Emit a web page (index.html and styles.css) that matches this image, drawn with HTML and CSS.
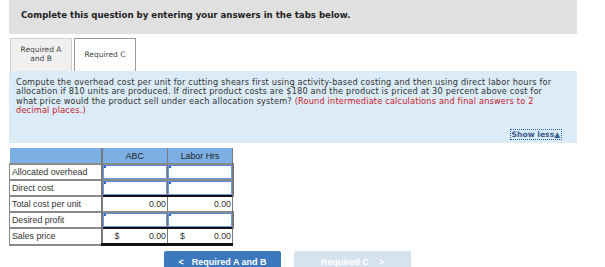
FILE: index.html
```html
<!DOCTYPE html>
<html>
<head>
<meta charset="utf-8">
<link rel="stylesheet" href="styles.css">
</head>
<body>
<div class="page">
  <div class="header">Complete this question by entering your answers in the tabs below.</div>
  <div class="tabs">
    <div class="tab tab-inactive">Required A<br>and B</div>
    <div class="tab tab-active">Required C</div>
  </div>
  <div class="question">
    <p class="qtext">Compute the overhead cost per unit for cutting shears first using activity-based costing and then using direct labor hours for allocation if 810 units are produced. If direct product costs are $180 and the product is priced at 30 percent above cost for what price would the product sell under each allocation system? <span class="red">(Round intermediate calculations and final answers to 2 decimal places.)</span></p>
    <div class="showless-row"><span class="showless">Show less&#9650;</span></div>
  </div>
  <table class="grid">
    <colgroup>
      <col class="c-lbl">
      <col class="c-val">
      <col class="c-val2">
    </colgroup>
    <tr class="head">
      <th></th>
      <th>ABC</th>
      <th>Labor Hrs</th>
    </tr>
    <tr>
      <td class="lbl">Allocated overhead</td>
      <td class="inp"><div class="box"><span class="dot"></span></div></td>
      <td class="inp"><div class="box"><span class="dot"></span></div></td>
    </tr>
    <tr>
      <td class="lbl">Direct cost</td>
      <td class="inp"><div class="box"><span class="dot"></span></div></td>
      <td class="inp"><div class="box"><span class="dot"></span></div></td>
    </tr>
    <tr class="total">
      <td class="lbl">Total cost per unit</td>
      <td class="val"><div class="valbox"><span></span><span>0.00</span></div></td>
      <td class="val"><div class="valbox"><span></span><span>0.00</span></div></td>
    </tr>
    <tr>
      <td class="lbl">Desired profit</td>
      <td class="inp"><div class="box"><span class="dot"></span></div></td>
      <td class="inp"><div class="box"><span class="dot"></span></div></td>
    </tr>
    <tr class="sales">
      <td class="lbl">Sales price</td>
      <td class="val"><div class="valbox"><span>$</span><span>0.00</span></div></td>
      <td class="val"><div class="valbox"><span>$</span><span>0.00</span></div></td>
    </tr>
  </table>
  <div class="nav">
    <div class="btn btn-prev"><span class="chev">&lt;</span>Required A and B</div>
    <div class="btn btn-next">Required C<span class="chev chev-r">&gt;</span></div>
  </div>
</div>
</body>
</html>
```
FILE: styles.css
```css
html, body {
  margin: 0;
  padding: 0;
  background: #fff;
}
.page {
  padding-left: 9px;
  font-family: "DejaVu Sans", Verdana, sans-serif;
}
.header {
  width: 568px;
  height: 34px;
  box-sizing: border-box;
  background: #e0e0e0;
  font-weight: bold;
  font-size: 8.6px;
  line-height: 10px;
  color: #222;
  padding: 10px 0 0 12px;
}
.tabs {
  display: flex;
  gap: 2px;
  margin-top: 4px;
  padding-left: 1px;
}
.tab {
  width: 62px;
  height: 33px;
  box-sizing: border-box;
  border: 1px solid #aaa;
  border-bottom: none;
  font-size: 7.5px;
  color: #444;
  display: flex;
  align-items: center;
  justify-content: center;
  text-align: center;
  line-height: 9.5px;
}
.tab-inactive {
  background: #f0f0f0;
  border-color: #cfcfcf;
  padding-bottom: 2px;
}
.tab-active {
  background: #fff;
  border-color: #9a9a9a;
}
.question {
  background: #dbebf8;
  width: 568px;
  height: 72px;
  box-sizing: border-box;
  padding: 7px 15px 0 7px;
}
.qtext {
  margin: 0;
  font-size: 8.2px;
  letter-spacing: 0.18px;
  line-height: 9.4px;
  color: #333;
}
.red {
  color: #c8202a;
}
.showless-row {
  display: flex;
  justify-content: flex-end;
  margin-top: 13px;
}
.showless {
  font-size: 7.6px;
  font-weight: bold;
  color: #3a5c8c;
  border: 1px dotted #2a5bb0;
  padding: 0 1px;
  line-height: 9px;
}
.grid {
  border-collapse: collapse;
  table-layout: fixed;
  width: 223px;
  margin-top: 5px;
  font-family: "Liberation Sans", Arial, sans-serif;
  font-size: 8.8px;
  color: #333;
}
.c-lbl { width: 92px; }
.c-val { width: 66px; }
.c-val2 { width: 65px; }
.grid th {
  background: #7cb0e4;
  font-weight: normal;
  height: 15px;
  padding: 0;
  border-right: 1px solid #7a7a7a;
  color: #222;
  text-align: center;
}
.grid th:first-child {
  border-right: 2px solid #7a7a7a;
}
.grid td {
  height: 16px;
  box-sizing: border-box;
  padding: 0;
  border-top: 2px solid #8a8a8a;
}
.grid td.lbl {
  padding-left: 2px;
  border-left: 1px solid #8a8a8a;
  border-right: 2px solid #7a7a7a;
  white-space: nowrap;
}
.grid td.inp {
  border-right: 1px solid #7a7a7a;
  background: #fff;
}
.grid td:last-child {
  border-right: 2px solid #7a7a7a;
}
.box {
  position: relative;
  height: 14px;
  box-sizing: border-box;
  border: 1px solid #6f9bdc;
  border-top: 1px solid #5588d6;
}
.dot {
  position: absolute;
  left: 0;
  top: 0;
  width: 2px;
  height: 2px;
  background: #2b63c6;
}
.grid td.val {
  border-right: 1px solid #7a7a7a;
}
.valbox {
  display: flex;
  justify-content: space-between;
  padding: 0 1px 0 12px;
  line-height: 14px;
}
.grid tr.total td.val,
.grid tr.sales td.val {
  border-top: 2px solid #111;
}
.grid tr.sales td {
  border-bottom: 2px solid #8a8a8a;
}
.grid tr.sales td.val {
  border-bottom: 3px solid #111;
}
.nav {
  display: flex;
  gap: 13px;
  margin-top: 5px;
  margin-left: 155px;
}
.btn {
  width: 117px;
  height: 22px;
  box-sizing: border-box;
  border-radius: 2px;
  font-family: "Liberation Sans", Arial, sans-serif;
  font-size: 9px;
  font-weight: bold;
  display: flex;
  align-items: center;
  justify-content: center;
}
.chev {
  margin-right: 8px;
}
.chev-r {
  margin-left: 10px;
  margin-right: 0;
}
.btn-prev {
  background: #3b78bd;
  color: #fff;
}
.btn-next {
  background: #d7e2ef;
  color: #fff;
}
```
